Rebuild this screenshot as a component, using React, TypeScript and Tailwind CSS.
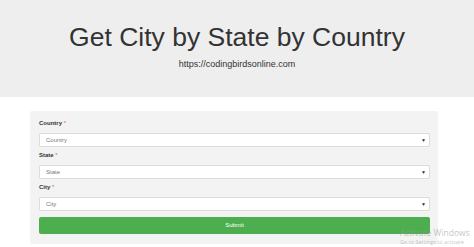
import { useState } from "react";

const fieldLabel = "block text-[6px] leading-[8px] font-bold text-[#333]";
const selectBox =
  "relative mt-[6px] flex h-[14px] items-center rounded-[2px] border border-[#dcdcdc] bg-white pl-[6px] text-[6px] text-[#777]";

function SelectField({ label, placeholder }: { label: string; placeholder: string }) {
  return (
    <div>
      <label className={fieldLabel}>
        {label} <span className="font-normal text-[#e05a5a]">*</span>
      </label>
      <div className={selectBox}>
        <span>{placeholder}</span>
        <span className="absolute right-[3px] top-[3px] text-[5px] leading-[6px] text-[#333]">▼</span>
      </div>
    </div>
  );
}

export default function App() {
  const [country] = useState("Country");

  return (
    <div className="relative h-[247px] w-[474px] overflow-hidden bg-white font-['Liberation_Sans',Arial,sans-serif]">
      <div className="flex h-[97px] flex-col items-center bg-[#eeeeee] pt-[22px]">
        <h1 className="text-[26.5px] leading-[30px] font-normal text-[#333]">Get City by State by Country</h1>
        <p className="mt-[6px] text-[9px] leading-[12px] text-[#333]">https://codingbirdsonline.com</p>
      </div>

      <form className="ml-[30px] mt-[14px] flex w-[408px] flex-col gap-[4px] rounded-[2px] bg-[#f3f3f3] pb-[10px] pl-[9px] pr-[8px] pt-[8px]">
        <SelectField label="Country" placeholder={country} />
        <SelectField label="State" placeholder="State" />
        <SelectField label="City" placeholder="City" />
        <button
          type="button"
          className="mt-[2px] h-[17px] w-full rounded-[2px] bg-[#4cae4f] text-[6px] leading-[17px] text-white"
        >
          Submit
        </button>
      </form>

      {/* windows activation watermark */}
      <div className="pointer-events-none absolute left-[400px] top-[227px] font-['Open_Sans',sans-serif] text-[#9a9a9a]/60">
        <div className="text-[8.5px] leading-[11px] whitespace-nowrap">Activate Windows</div>
        <div className="text-[5.5px] leading-[8px] whitespace-nowrap">Go to Settings to activate</div>
      </div>
    </div>
  );
}
